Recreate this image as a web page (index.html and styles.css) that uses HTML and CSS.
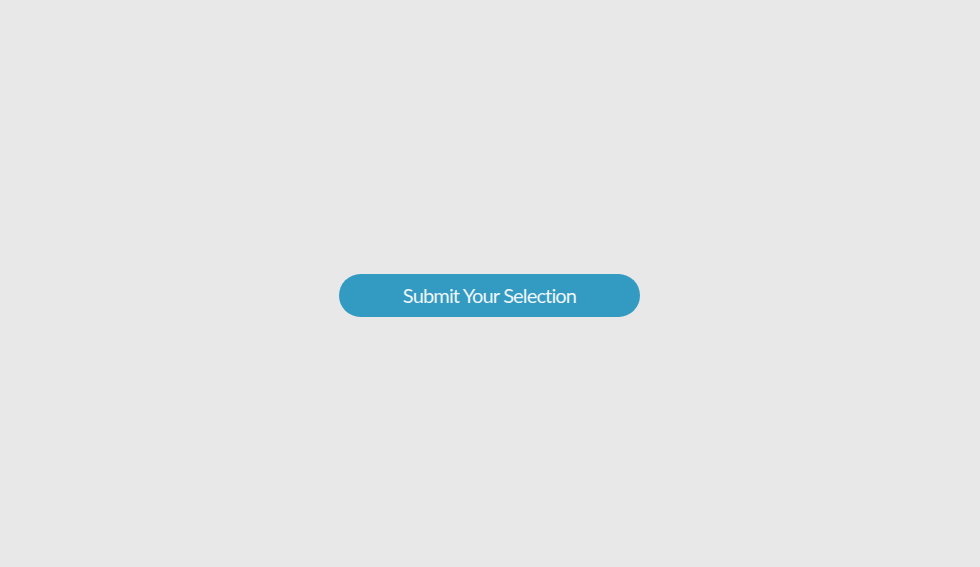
FILE: index.html
```html
<!DOCTYPE html>
<html>
<head>
<meta charset="utf-8">
<link rel="stylesheet" href="styles.css">
</head>
<body>
<main class="stage">
  <button class="submit">Submit Your Selection</button>
</main>
</body>
</html>
```
FILE: styles.css
```css
html, body {
  margin: 0;
  padding: 0;
  background: #e8e8e8;
}
.stage {
  height: 567px;
  box-sizing: border-box;
  padding-top: 24px;
  display: flex;
  align-items: center;
  justify-content: center;
}
.submit {
  width: 301px;
  height: 43px;
  border: none;
  border-radius: 22px;
  background: #339ac2;
  color: #eef6fa;
  font-family: "Lato", sans-serif;
  font-size: 20px;
  letter-spacing: -0.85px;
  padding: 0 0 2px 0;
  margin-left: -1px;
}
```
